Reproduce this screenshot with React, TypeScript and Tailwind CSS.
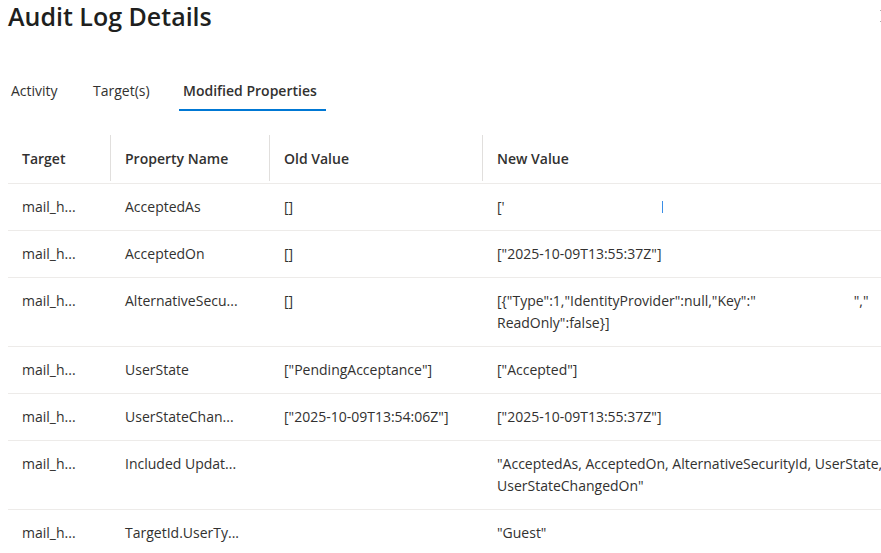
import React from 'react';

type Row = {
  target: string;
  prop: string;
  oldValue: React.ReactNode;
  newValue: React.ReactNode;
};

const rows: Row[] = [
  {
    target: 'mail_h...',
    prop: 'AcceptedAs',
    oldValue: '[]',
    newValue: (
      <span className="whitespace-nowrap">
        ['
        <span className="inline-block w-px h-[12px] bg-[#3a8ee6] ml-[157px] align-[-1px]" />
      </span>
    ),
  },
  { target: 'mail_h...', prop: 'AcceptedOn', oldValue: '[]', newValue: '["2025-10-09T13:55:37Z"]' },
  {
    target: 'mail_h...',
    prop: 'AlternativeSecu...',
    oldValue: '[]',
    newValue: (
      <>
        <span className="block whitespace-nowrap">
          [{'{'}"Type":1,"IdentityProvider":null,"Key":"
          <span className="inline-block w-[98px]" />
          ","
        </span>
        <span className="block">ReadOnly":false{'}'}]</span>
      </>
    ),
  },
  { target: 'mail_h...', prop: 'UserState', oldValue: '["PendingAcceptance"]', newValue: '["Accepted"]' },
  {
    target: 'mail_h...',
    prop: 'UserStateChan...',
    oldValue: '["2025-10-09T13:54:06Z"]',
    newValue: '["2025-10-09T13:55:37Z"]',
  },
  {
    target: 'mail_h...',
    prop: 'Included Updat...',
    oldValue: '',
    newValue: (
      <>
        <span className="block whitespace-nowrap">
          "AcceptedAs, AcceptedOn, AlternativeSecurityId, UserState,
        </span>
        <span className="block">UserStateChangedOn"</span>
      </>
    ),
  },
  { target: 'mail_h...', prop: 'TargetId.UserTy...', oldValue: '', newValue: '"Guest"' },
];

const headers = ['Target', 'Property Name', 'Old Value', 'New Value'];

export default function App() {
  return (
    <div
      className="w-[881px] h-[553px] overflow-hidden bg-white text-[#323130] text-[14px]"
      style={{ fontFamily: '"Segoe UI", "Open Sans", "Noto Sans", sans-serif' }}
    >
      {/* En-tête */}
      <div className="flex justify-between items-start h-[32px]">
        <h1 className="pl-2 text-[25px] leading-[32px] font-semibold text-[#201f1e]">Audit Log Details</h1>
        <svg width="12" height="12" viewBox="0 0 12 12" className="mt-[10px] -mr-[11px] shrink-0">
          <path d="M0.5 0.5 L11.5 11.5 M11.5 0.5 L0.5 11.5" stroke="#605e5c" strokeWidth="1" />
        </svg>
      </div>

      {/* Onglets */}
      <div className="flex mt-[49px] pl-[7px] gap-6 leading-[20px]">
        <div className="w-[58px] px-1 pb-[10px]">Activity</div>
        <div className="w-[66px] px-1 pb-[10px]">Target(s)</div>
        <div className="w-[147px] px-1 pb-[8px] font-semibold border-b-2 border-[#0078d4] whitespace-nowrap">
          Modified Properties
        </div>
      </div>

      {/* Tableau */}
      <div className="ml-2 mt-[23px] w-[873px]">
        <div className="grid grid-cols-[102px_159px_213px_1fr] h-[50px] border-b border-[#edebe9] font-semibold">
          {headers.map((h, i) => (
            <div key={h} className="flex items-start pt-[1px]">
              <div
                className={`h-[46px] flex items-center w-full pl-[14px] ${
                  i > 0 ? 'border-l border-[#e1dfdd]' : ''
                }`}
              >
                {h}
              </div>
            </div>
          ))}
        </div>
        {rows.map((r, idx) => (
          <div
            key={idx}
            className="grid grid-cols-[102px_159px_213px_1fr] border-b border-[#edebe9] leading-[22px] py-3"
          >
            <div className="pl-[14px] whitespace-nowrap">{r.target}</div>
            <div className="pl-[15px] whitespace-nowrap">{r.prop}</div>
            <div className="pl-[15px] whitespace-nowrap">{r.oldValue}</div>
            <div className="pl-[15px]">{r.newValue}</div>
          </div>
        ))}
      </div>
    </div>
  );
}
